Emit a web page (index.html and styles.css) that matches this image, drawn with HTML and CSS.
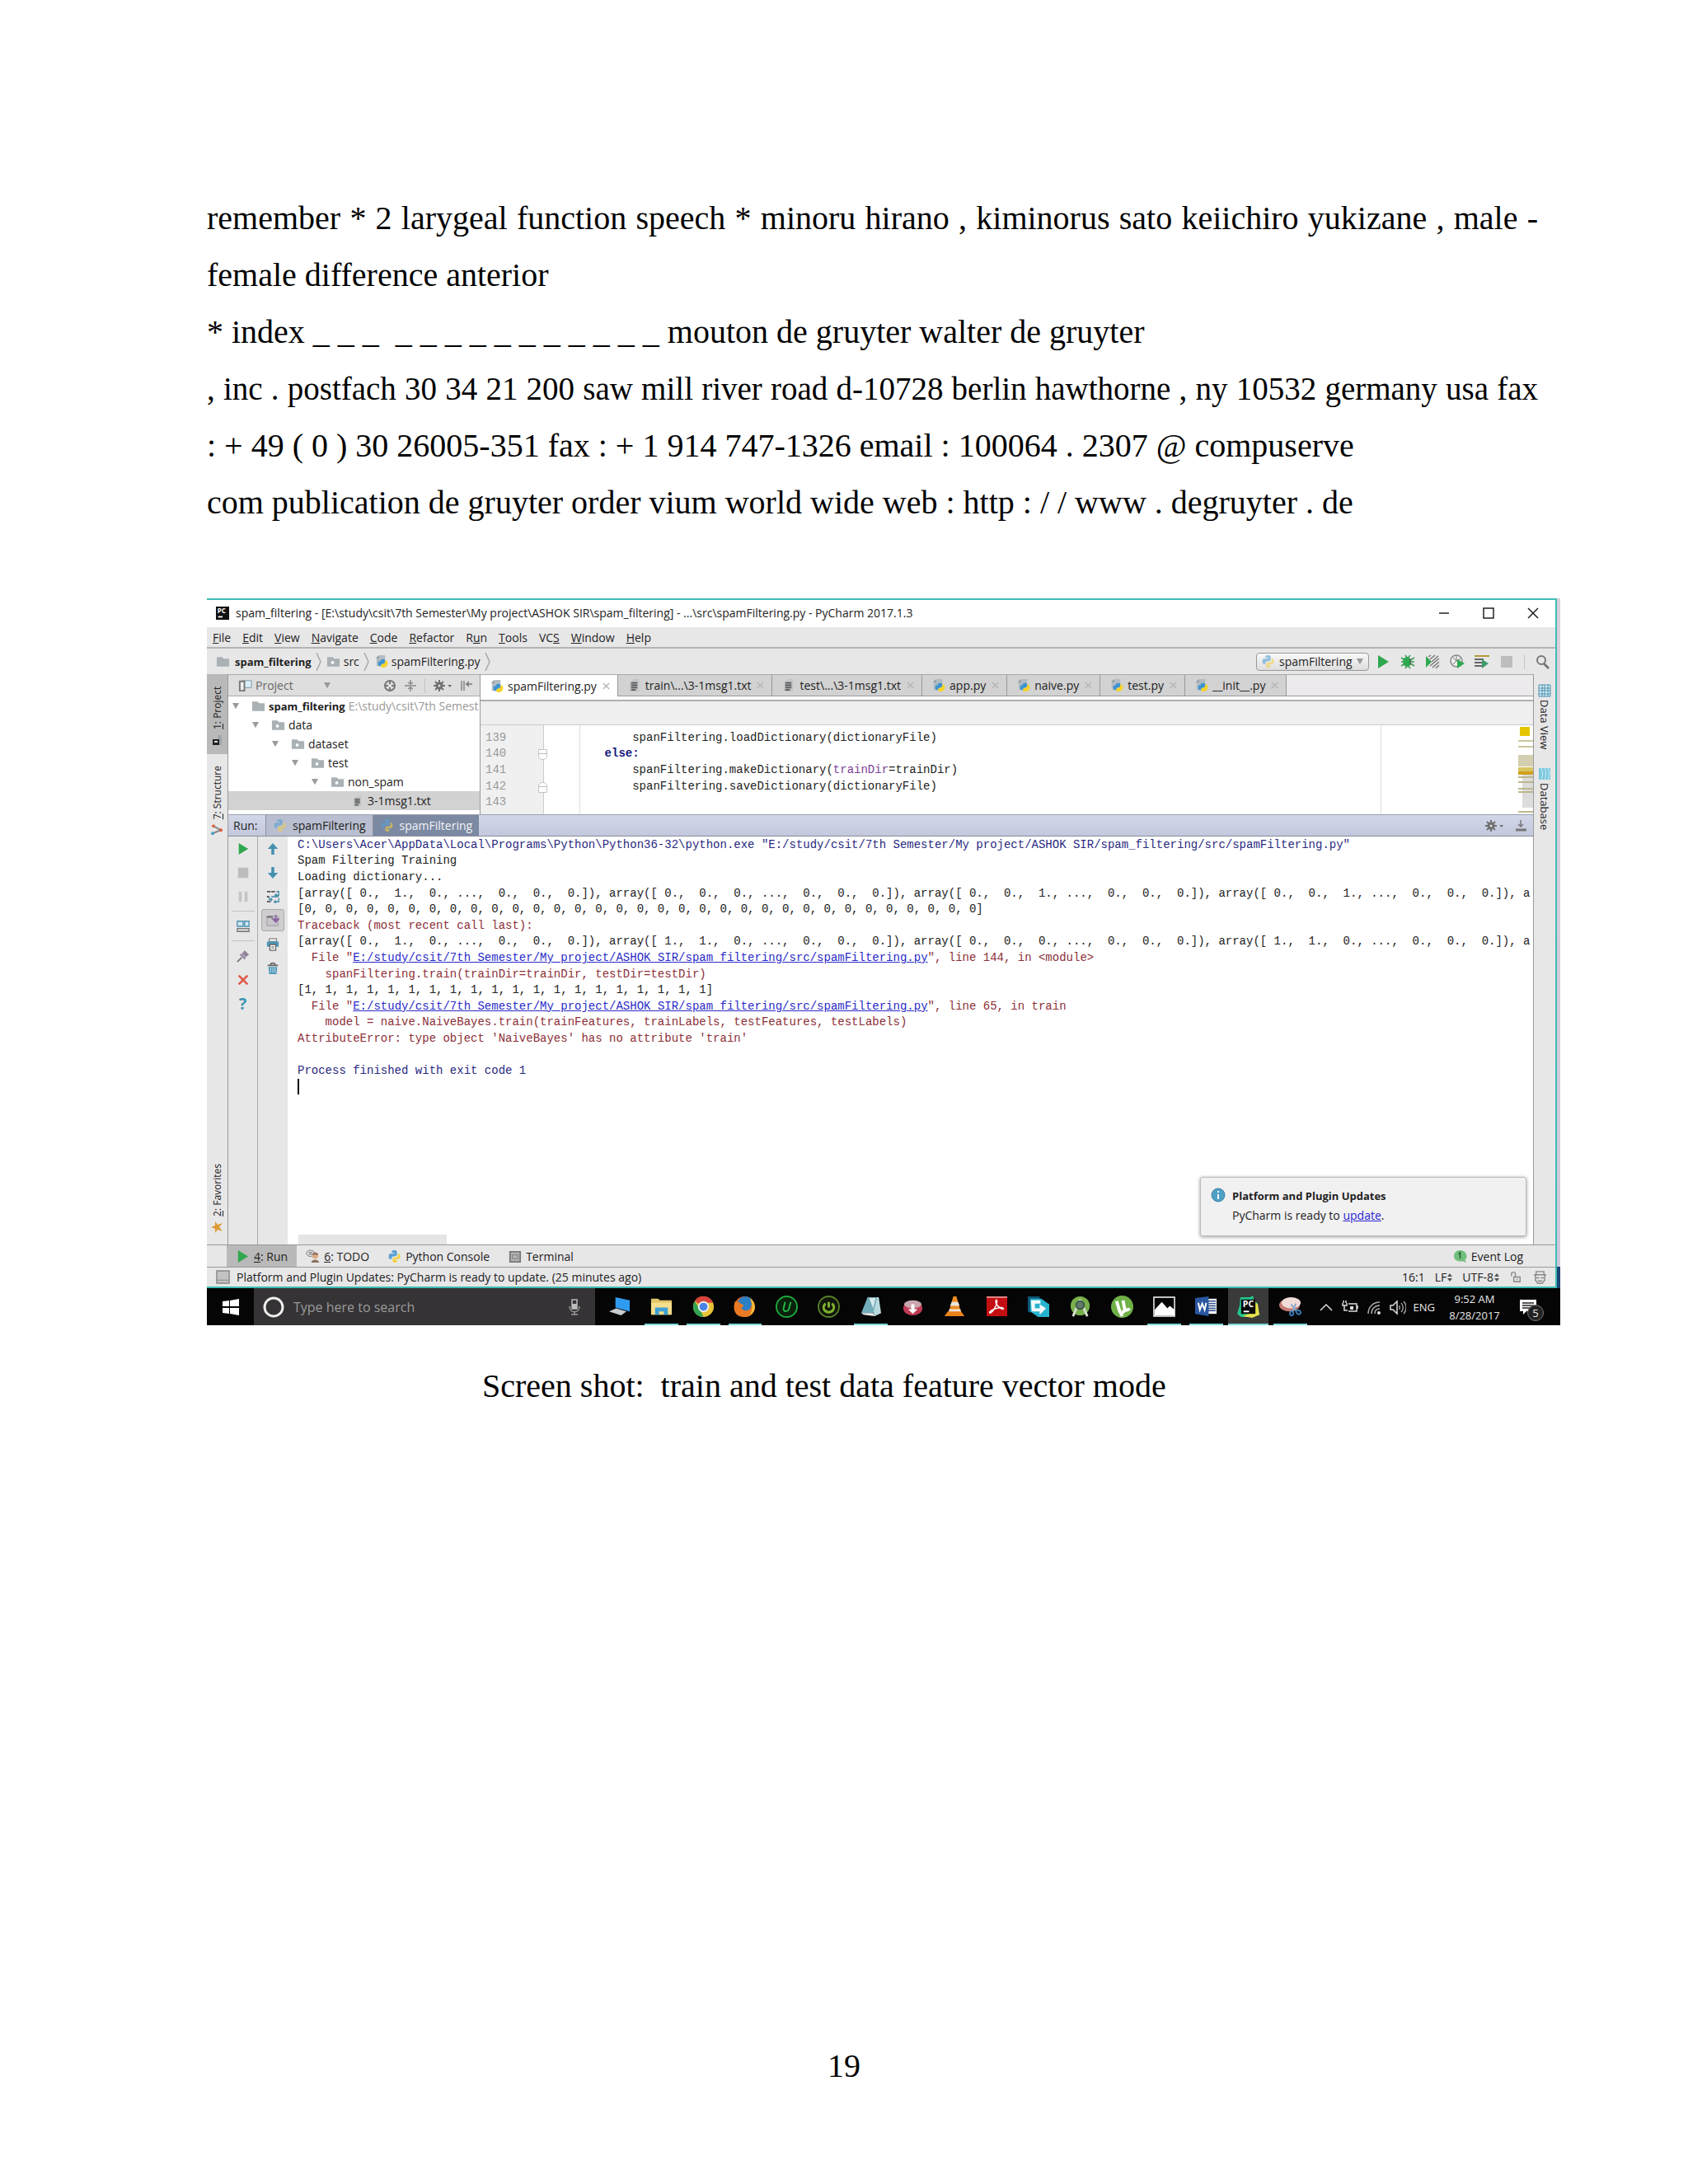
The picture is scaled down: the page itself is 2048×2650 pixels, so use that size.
FILE: index.html
```html
<!DOCTYPE html>
<html lang="en">
<head>
  <meta charset="UTF-8">
  <title>Screen shot: train and test data feature vector mode</title>
  <link rel="stylesheet" href="styles.css">
</head>
<body>
<svg class="defs" aria-hidden="true">
  <symbol id="folder" viewBox="0 0 18 14"><path d="M1 1h7l2 2h7v10H1z" fill="#a9b1b5"/></symbol>
  <symbol id="package" viewBox="0 0 18 14"><path d="M1 1h7l2 2h7v10H1z" fill="#a9b1b5"/><circle cx="8" cy="8" r="2" fill="#fff"/></symbol>
  <symbol id="python" viewBox="0 0 16 16"><path d="M8 1c-3 0-3 1-3 3h3v1H3c-2 0-2 6 0 6h2V9c0-2 5 0 6-3V3c0-2-2-2-3-2z" fill="#5a9fd4"/><path d="M8 15c3 0 3-1 3-3H8v-1h5c2 0 2-6 0-6h-1v3c0 2-6 0-6 3v2c0 2 1 2 2 2z" fill="#f3cf3f"/></symbol>
  <symbol id="py" viewBox="0 0 18 18"><path d="M7 1h7v14H3V5z" fill="#b3bcc2"/><path d="M2 5l4-4v4z" fill="#8f999f"/><path d="M11 6c-2 0-3 1-3 3H6c-2 1-1 6 1 6h2c0-4 3-3 5-4V8c0-2-1-2-3-2z" fill="#3e94d1"/><path d="M14 8h2c3 3 1 9-4 9-3 0-4-1-3-4 3-1 5 0 5-5z" fill="#f5d32c"/></symbol>
  <symbol id="txt" viewBox="0 0 16 18"><path d="M7 1h7v16H2V6z" fill="#c3c6c8"/><path d="M4 6h8M4 9h8M4 12h8M4 15h6" stroke="#555" stroke-width="2"/></symbol>
  <symbol id="play" viewBox="0 0 16 18"><path d="M2 1l13 8-13 8z" fill="#2fa84f"/></symbol>
  <symbol id="gear" viewBox="0 0 24 16"><path d="M8 1v14M1 8h14M3 3l10 10M13 3L3 13" stroke="#707070" stroke-width="2"/><circle cx="8" cy="8" r="3" fill="#ddd" stroke="#707070" stroke-width="3"/><path d="M18 7h5l-2 3z" fill="#707070"/></symbol>
  <symbol id="open" viewBox="0 0 12 10"><path d="M1 0h10L6 9z" fill="#9a9a9a"/></symbol>
  <symbol id="cross" viewBox="0 0 10 10"><path d="M1 1l8 8M9 1L1 9" stroke="#b5b5b5" stroke-width="1.5"/></symbol>
  <symbol id="sep" viewBox="0 0 8 24"><path d="M1 1l5 11-5 11" fill="none" stroke="#a8a8a8" stroke-width="1.5"/></symbol>
</svg>

<main class="page">
  <div class="text">
    <p class="full">remember * 2 larygeal function speech * minoru hirano , kiminorus sato keiichiro yukizane , male -</p>
    <p>female difference anterior</p>
    <p>* index _ _ _&nbsp; _ _ _ _ _ _ _ _ _ _ _ mouton de gruyter walter de gruyter</p>
    <p class="full tight">, inc . postfach 30 34 21 200 saw mill river road d-10728 berlin hawthorne , ny 10532 germany usa fax</p>
    <p>: + 49 ( 0 ) 30 26005-351 fax : + 1 914 747-1326 email : 100064 . 2307 @ compuserve</p>
    <p>com publication de gruyter order vium world wide web : http : / / www . degruyter . de</p>
  </div>

  <figure>
    <div class="desktop">
      <div class="window">
        <header class="titlebar">
          <svg class="logo" viewBox="0 0 18 18"><rect width="18" height="18" fill="#111"/><path d="M3 14h6" stroke="#fff" stroke-width="2"/><text x="2" y="9" class="logo-text">PC</text></svg>
          <span>spam_filtering - [E:\study\csit\7th Semester\My project\ASHOK SIR\spam_filtering] - ...\src\spamFiltering.py - PyCharm 2017.1.3</span>
          <div class="winbtns">
            <button aria-label="Minimize"><svg viewBox="0 0 14 14"><path d="M1 7h12" stroke="#222" stroke-width="1.5"/></svg></button>
            <button aria-label="Maximize"><svg viewBox="0 0 14 14"><rect x="1" y="1" width="12" height="12" fill="none" stroke="#222" stroke-width="1.5"/></svg></button>
            <button aria-label="Close"><svg viewBox="0 0 14 14"><path d="M1 1l12 12M13 1L1 13" stroke="#222" stroke-width="1.5"/></svg></button>
          </div>
        </header>

        <nav class="menubar">
          <button><u>F</u>ile</button><button><u>E</u>dit</button><button><u>V</u>iew</button><button><u>N</u>avigate</button><button><u>C</u>ode</button><button><u>R</u>efactor</button><button>R<u>u</u>n</button><button><u>T</u>ools</button><button>VC<u>S</u></button><button><u>W</u>indow</button><button><u>H</u>elp</button>
        </nav>

        <div class="navbar">
          <svg class="i-folder"><use href="#folder"/></svg><a href="#" class="bold">spam_filtering</a><svg class="i-sep"><use href="#sep"/></svg>
          <svg class="i-folder"><use href="#package"/></svg><a href="#">src</a><svg class="i-sep"><use href="#sep"/></svg>
          <svg class="i-file"><use href="#py"/></svg><a href="#">spamFiltering.py</a><svg class="i-sep"><use href="#sep"/></svg>
          <div class="runbar">
            <label class="config" aria-label="Run configuration">
              <svg class="i-file faint"><use href="#python"/></svg>
              <select><option>spamFiltering</option></select>
              <svg class="i-caret"><use href="#open"/></svg>
            </label>
            <button aria-label="Run"><svg viewBox="0 0 18 18"><path d="M3 1l13 8-13 8z" fill="#2fa84f"/></svg></button>
            <button aria-label="Debug"><svg viewBox="0 0 18 18"><path d="M1 4l16 10M1 14L17 4M1 9h16M6 1l3 4 3-4M6 17l3-4 3 4" stroke="#3b9a55" stroke-width="1.5" fill="none"/><ellipse cx="8" cy="9" rx="5" ry="6" fill="#2fa84f"/><path d="M12 5v8" stroke="#555"/></svg></button>
            <button aria-label="Coverage"><svg viewBox="0 0 18 18"><path d="M1 2l7 7-7 7z" fill="#2fa84f"/><path d="M4 3l3-2M6 6l6-5M8 9l8-7M6 14l11-9M9 16l8-7M13 17l4-4" stroke="#777" stroke-width="1.5"/></svg></button>
            <button aria-label="Profile"><svg viewBox="0 0 18 18"><circle cx="8" cy="8" r="7" fill="#eee" stroke="#888" stroke-width="1.5"/><path d="M4 4l4 4-4 4M8 2v6l5-3" stroke="#777" fill="none"/><path d="M9 6l9 5-9 6z" fill="#2fa84f"/></svg></button>
            <button aria-label="Concurrency"><svg viewBox="0 0 18 18"><path d="M0 2h18" stroke="#b39a37" stroke-width="2"/><path d="M0 6h11M0 10h9M0 14h9" stroke="#666" stroke-width="2"/><path d="M9 6l8 5-8 6z" fill="#3b9a6a"/></svg></button>
            <button aria-label="Stop"><svg viewBox="0 0 18 18"><rect x="2" y="2" width="14" height="14" fill="#bdbdbd"/></svg></button>
            <i class="bar"></i>
            <button aria-label="Search everywhere"><svg viewBox="0 0 18 18"><circle cx="8" cy="7" r="5" fill="none" stroke="#777" stroke-width="2"/><path d="M11 11l6 6" stroke="#777" stroke-width="3"/></svg></button>
          </div>
        </div>

        <div class="workspace">
          <aside class="stripe left">
            <button class="on"><svg viewBox="0 0 14 14"><path d="M1 1h5v12H1z" fill="#a0a6ab"/><path d="M4 1h8v7H4z" fill="#222"/><path d="M6 4h4v2H6z" fill="#ddd"/></svg><span><u>1</u>: Project</span></button>
            <button><svg viewBox="0 0 14 14"><path d="M12 3L2 7l9 5" stroke="#888" stroke-width="2" fill="none"/><circle cx="12" cy="3" r="2" fill="#4a9fc0"/><circle cx="2" cy="7" r="2" fill="#db5b45"/><circle cx="11" cy="12" r="2" fill="#d5674f"/></svg><span><u>7</u>: Structure</span></button>
            <button class="last"><svg viewBox="0 0 14 14"><path d="M14 7L9 9v5l-3-4-6 2 4-5-4-5 6 2 3-4v5z" fill="#dc9a35"/></svg><span><u>2</u>: Favorites</span></button>
          </aside>

          <div class="center">
            <div class="upper">
              <section class="project">
                <div class="phead">
                  <svg class="i-file" viewBox="0 0 18 18"><rect x="6" y="3" width="11" height="9" fill="#d9edf5" stroke="#7e9caa"/><path d="M2 4h6v12H2z" fill="#eee" stroke="#777" stroke-width="2"/></svg>
                  <span>Project</span>
                  <svg class="i-drop"><use href="#open"/></svg>
                  <div class="ptools">
                    <svg class="i-tool" viewBox="0 0 16 16"><circle cx="8" cy="8" r="6" fill="none" stroke="#777" stroke-width="2"/><path d="M8 1v5M8 10v5M1 8h5M10 8h5" stroke="#777" stroke-width="2"/></svg>
                    <svg class="i-tool" viewBox="0 0 16 16"><path d="M1 8h14M8 1v5M8 10v5M5 4l3 2 3-2M5 12l3-2 3 2" stroke="#888" stroke-width="1.5" fill="none"/></svg>
                    <i class="bar"></i>
                    <svg class="i-gear"><use href="#gear"/></svg>
                    <svg class="i-tool" viewBox="0 0 16 16"><path d="M2 2v12M5 2v12" stroke="#888" stroke-width="1.5"/><path d="M15 6H8l3-3M8 6l3 3" stroke="#777" stroke-width="1.5" fill="none"/></svg>
                  </div>
                </div>
                <ul class="tree">
                  <li><svg class="i-open"><use href="#open"/></svg><svg class="i-folder"><use href="#folder"/></svg><b>spam_filtering</b><span class="dim">E:\study\csit\7th Semest</span></li>
                  <li class="d1"><svg class="i-open"><use href="#open"/></svg><svg class="i-folder"><use href="#package"/></svg>data</li>
                  <li class="d2"><svg class="i-open"><use href="#open"/></svg><svg class="i-folder"><use href="#package"/></svg>dataset</li>
                  <li class="d3"><svg class="i-open"><use href="#open"/></svg><svg class="i-folder"><use href="#package"/></svg>test</li>
                  <li class="d4"><svg class="i-open"><use href="#open"/></svg><svg class="i-folder"><use href="#package"/></svg>non_spam</li>
                  <li class="d5 sel"><svg class="i-folder"><use href="#txt"/></svg>3-1msg1.txt</li>
                </ul>
              </section>

              <section class="editor">
                <div class="tabs">
                  <button class="on"><svg class="i-file"><use href="#py"/></svg>spamFiltering.py<svg class="i-x"><use href="#cross"/></svg></button>
                  <button><svg class="i-file"><use href="#txt"/></svg>train\...\3-1msg1.txt<svg class="i-x"><use href="#cross"/></svg></button>
                  <button><svg class="i-file"><use href="#txt"/></svg>test\...\3-1msg1.txt<svg class="i-x"><use href="#cross"/></svg></button>
                  <button><svg class="i-file"><use href="#py"/></svg>app.py<svg class="i-x"><use href="#cross"/></svg></button>
                  <button><svg class="i-file"><use href="#py"/></svg>naive.py<svg class="i-x"><use href="#cross"/></svg></button>
                  <button><svg class="i-file"><use href="#py"/></svg>test.py<svg class="i-x"><use href="#cross"/></svg></button>
                  <button><svg class="i-file"><use href="#py"/></svg>__init__.py<svg class="i-x"><use href="#cross"/></svg></button>
                </div>
                <div class="crumb"></div>
                <div class="code">
                  <div class="gutter"><span>139</span><span class="fold">140</span><span>141</span><span class="fold up">142</span><span>143</span></div>
                  <div class="lines">
                    <pre>        spanFiltering.loadDictionary(dictionaryFile)</pre>
                    <pre>    <b>else:</b></pre>
                    <pre>        spanFiltering.makeDictionary(<em>trainDir</em>=trainDir)</pre>
                    <pre>        spanFiltering.saveDictionary(dictionaryFile)</pre>
                    <pre> </pre>
                  </div>
                  <svg class="marks" viewBox="0 0 18 108" preserveAspectRatio="none">
                    <rect x="2" y="2" width="12" height="11" fill="#e5c500"/>
                    <path d="M0 19h18M0 26h18" stroke="#cfc79a" stroke-width="2"/>
                    <rect y="36" width="18" height="14" fill="#d3cfb0"/>
                    <rect y="51" width="18" height="5" fill="#d8c463"/>
                    <rect y="56" width="18" height="4" fill="#cfa21c"/>
                    <rect x="5" y="60" width="13" height="40" fill="#dcdcdc"/>
                    <path d="M0 63h18M0 69h18M0 77h18M0 81h18M0 105h18" stroke="#bdb78d" stroke-width="2"/>
                  </svg>
                </div>
              </section>
            </div>

            <section class="run">
              <div class="rhead">
                <span>Run:</span>
                <button><svg class="i-file faint"><use href="#python"/></svg>spamFiltering</button>
                <button class="on"><svg class="i-file faint"><use href="#python"/></svg>spamFiltering</button>
                <div class="rtools">
                  <svg class="i-gear"><use href="#gear"/></svg>
                  <svg class="i-tool" viewBox="0 0 16 16"><path d="M8 1v8M5 6l3 3 3-3" stroke="#777" fill="none" stroke-width="1.5"/><path d="M2 13h13" stroke="#777" stroke-width="3"/></svg>
                </div>
              </div>
              <div class="rbody">
                <div class="tools">
                  <button aria-label="Rerun"><svg viewBox="0 0 18 18"><path d="M3 1l13 8-13 8z" fill="#2fa84f"/></svg></button>
                  <button aria-label="Stop"><svg viewBox="0 0 18 18"><rect x="2" y="2" width="14" height="14" fill="#bdbdbd"/></svg></button>
                  <button aria-label="Pause"><svg viewBox="0 0 18 18"><path d="M3 2h4v14H3zM11 2h4v14h-4z" fill="#c4c4c4"/></svg></button>
                  <hr>
                  <button aria-label="Layout"><svg viewBox="0 0 18 18"><path d="M1 2h8v7H1zM11 2h6v7h-6z" fill="#cfe7f3" stroke="#4a8fae" stroke-width="1.5"/><path d="M1 12h16v4H1z" fill="#ddd" stroke="#777" stroke-width="1.5"/></svg></button>
                  <hr>
                  <button aria-label="Pin"><svg viewBox="0 0 18 18"><path d="M1 17l6-6" stroke="#777" stroke-width="2"/><path d="M4 7l7 7 2-4 4-3-6-6-3 4z" fill="#91859c"/><path d="M7 6l5 5" stroke="#ddd"/></svg></button>
                  <button aria-label="Close"><svg viewBox="0 0 18 18"><path d="M3 3l12 12M15 3L3 15" stroke="#e0594b" stroke-width="3"/></svg></button>
                  <button aria-label="Help" class="help">?</button>
                </div>
                <div class="tools second">
                  <button aria-label="Up"><svg viewBox="0 0 18 18"><path d="M9 1l7 8h-5v8H7V9H2z" fill="#4591b0"/></svg></button>
                  <button aria-label="Down"><svg viewBox="0 0 18 18"><path d="M9 17l7-8h-5V1H7v8H2z" fill="#4591b0"/></svg></button>
                  <button aria-label="Soft wrap"><svg viewBox="0 0 18 18"><path d="M1 2h11M1 9h3M1 16h6" stroke="#555" stroke-width="2" stroke-dasharray="5 1"/><path d="M14 2h3v5h-5M7 9h10M4 9v4h4M17 11v5h-6M14 5l-2 2 2 2M6 11l2 2-2 2M13 14l-2 2 2 2" stroke="#438ca8" stroke-width="1.5" fill="none"/></svg></button>
                  <button aria-label="Scroll to end" class="pressed"><svg viewBox="0 0 18 18"><path d="M1 3h15v13H1z" fill="#c9c5cd" stroke="#999"/><path d="M1 4h8" stroke="#666" stroke-width="2"/><path d="M13 1v8M9 7l4 4 4-4z" stroke="#8b65a2" stroke-width="2" fill="#8b65a2"/></svg></button>
                  <button aria-label="Print"><svg viewBox="0 0 18 18"><path d="M4 1h10v4H4z" fill="#eee" stroke="#666"/><path d="M1 5h16v7H1z" fill="#4a97b8"/><path d="M5 9h8v8H5z" fill="#fff" stroke="#666" stroke-width="1.5"/><path d="M7 12h4M7 14h4" stroke="#666"/></svg></button>
                  <button aria-label="Clear"><svg viewBox="0 0 18 18"><path d="M2 5h14M6 4c0-3 6-3 6 0" stroke="#666" stroke-width="2" fill="none"/><path d="M3 7h12l-1 10H4z" fill="#4a97b8"/><path d="M6 8v7M9 8v7M12 8v7" stroke="#d5eaf3"/></svg></button>
                </div>
                <div class="console">
                  <div class="output">
                    <pre class="sys">C:\Users\Acer\AppData\Local\Programs\Python\Python36-32\python.exe "E:/study/csit/7th Semester/My project/ASHOK SIR/spam_filtering/src/spamFiltering.py"</pre>
                    <pre>Spam Filtering Training</pre>
                    <pre>Loading dictionary...</pre>
                    <pre>[array([ 0.,  1.,  0., ...,  0.,  0.,  0.]), array([ 0.,  0.,  0., ...,  0.,  0.,  0.]), array([ 0.,  0.,  1., ...,  0.,  0.,  0.]), array([ 0.,  0.,  1., ...,  0.,  0.,  0.]), a</pre>
                    <pre>[0, 0, 0, 0, 0, 0, 0, 0, 0, 0, 0, 0, 0, 0, 0, 0, 0, 0, 0, 0, 0, 0, 0, 0, 0, 0, 0, 0, 0, 0, 0, 0, 0]</pre>
                    <pre class="err">Traceback (most recent call last):</pre>
                    <pre>[array([ 0.,  1.,  0., ...,  0.,  0.,  0.]), array([ 1.,  1.,  0., ...,  0.,  0.,  0.]), array([ 0.,  0.,  0., ...,  0.,  0.,  0.]), array([ 1.,  1.,  0., ...,  0.,  0.,  0.]), a</pre>
                    <pre class="err">  File "<a href="#">E:/study/csit/7th Semester/My project/ASHOK SIR/spam_filtering/src/spamFiltering.py</a>", line 144, in &lt;module&gt;</pre>
                    <pre class="err">    spanFiltering.train(trainDir=trainDir, testDir=testDir)</pre>
                    <pre>[1, 1, 1, 1, 1, 1, 1, 1, 1, 1, 1, 1, 1, 1, 1, 1, 1, 1, 1, 1]</pre>
                    <pre class="err">  File "<a href="#">E:/study/csit/7th Semester/My project/ASHOK SIR/spam_filtering/src/spamFiltering.py</a>", line 65, in train</pre>
                    <pre class="err">    model = naive.NaiveBayes.train(trainFeatures, trainLabels, testFeatures, testLabels)</pre>
                    <pre class="err">AttributeError: type object 'NaiveBayes' has no attribute 'train'</pre>
                    <pre> </pre>
                    <pre class="sys">Process finished with exit code 1</pre>
                  </div>
                  <div class="caret"></div>
                  <div class="scroll"></div>
                  <div class="balloon">
                    <svg viewBox="0 0 18 18"><circle cx="9" cy="9" r="8" fill="#4f9fc4" stroke="#3d86a8"/><path d="M9 8v6M9 4v2" stroke="#fff" stroke-width="2"/></svg>
                    <div><b>Platform and Plugin Updates</b><br>PyCharm is ready to <a href="#">update</a>.</div>
                  </div>
                </div>
              </div>
            </section>
          </div>

          <aside class="stripe right">
            <button><svg viewBox="0 0 16 16"><path d="M1 1h14v14H1z" fill="#d8edf5"/><path d="M1 1h14v14H1zM1 5h14M1 8h14M1 12h14M5 1v14M8 1v14M12 1v14" stroke="#4a8fae" fill="none"/></svg><span>Data View</span></button>
            <button><svg viewBox="0 0 16 16"><path d="M1 1h14v14H1z" fill="#7cc8df"/><path d="M4 1c2 4 2 10 0 14M8 1c2 4 2 10 0 14M12 1c2 4 2 10 0 14" stroke="#d5f0f7" fill="none"/></svg><span>Database</span></button>
          </aside>
        </div>

        <div class="toolbar">
          <button class="on"><svg class="i-file"><use href="#play"/></svg><span><u>4</u>: Run</span></button>
          <button><svg class="i-file" viewBox="0 0 18 18"><ellipse cx="6" cy="5" rx="5" ry="4" fill="#ddd" stroke="#777"/><path d="M4 4h4M4 6h4" stroke="#666"/><circle cx="12" cy="8" r="4" fill="#d9ab84"/><path d="M8 7c1-4 8-4 8 0M7 17c0-5 10-5 10 0z" fill="#8e705e"/></svg><span><u>6</u>: TODO</span></button>
          <button><svg class="i-file"><use href="#python"/></svg><span>Python Console</span></button>
          <button><svg class="i-file" viewBox="0 0 18 18"><path d="M3 3h13v13H3z" fill="#b5b5b5" stroke="#777" stroke-width="2"/><path d="M6 7h7v5H6z" fill="none" stroke="#777"/></svg><span>Terminal</span></button>
          <button class="last"><svg class="i-file" viewBox="0 0 18 18"><path d="M9 1c10 0 10 12 6 12l2 4-5-2C-2 18-2 1 9 1z" fill="#71bf7c"/><path d="M7 6l2-2v8" stroke="#275c35" stroke-width="1.5" fill="none"/></svg><span>Event Log</span></button>
        </div>
        <footer class="status">
          <svg class="i-file" viewBox="0 0 18 18"><path d="M1 1h16v16H1z" fill="#c3c3c3" stroke="#888" stroke-width="1.5"/><path d="M2 13h14" stroke="#888"/></svg>
          <span>Platform and Plugin Updates: PyCharm is ready to update. (25 minutes ago)</span>
          <div class="info">
            <span>16:1</span>
            <span class="pick">LF<svg viewBox="0 0 6 10"><path d="M0 4l3-4 3 4zM0 6h6l-3 4z" fill="#555"/></svg></span>
            <span class="pick">UTF-8<svg viewBox="0 0 6 10"><path d="M0 4l3-4 3 4zM0 6h6l-3 4z" fill="#555"/></svg></span>
            <svg class="i-file" viewBox="0 0 18 18"><path d="M6 9h8v6H6zM3 8V5c0-3 5-3 5 0v4" fill="none" stroke="#888" stroke-width="1.5"/><path d="M10 11v2" stroke="#777"/></svg>
            <svg class="i-file" viewBox="0 0 18 18"><path d="M4 6V2h10v4M1 6h16M3 7v6l3 4h6l3-4V7M4 10h4M10 10h4M6 14h6" fill="none" stroke="#888" stroke-width="1.5"/></svg>
          </div>
        </footer>
      </div>

      <div class="taskbar">
        <button class="start" aria-label="Start"><svg viewBox="0 0 20 20"><path d="M0 3l8-1v7H0zM9 2l11-2v9H9zM0 11h8v7l-8-1zM9 11h11v9L9 18z" fill="#fff"/></svg></button>
        <label class="search">
          <svg class="ring" viewBox="0 0 26 26"><circle cx="13" cy="13" r="11" fill="none" stroke="#eee" stroke-width="3"/></svg>
          <input type="text" placeholder="Type here to search" aria-label="Search">
          <svg class="mic" viewBox="0 0 16 20"><path d="M5 1h6v11H5z" fill="none" stroke="#bbb" stroke-width="1.5"/><path d="M5 6h6v6H5z" fill="#bbb"/><path d="M2 9c0 9 12 9 12 0M8 16v3M4 19h8" fill="none" stroke="#999" stroke-width="1.5"/></svg>
        </label>
        <div class="apps">
          <a href="#"><svg viewBox="0 0 28 28"><path d="M9 2l18 4v14L9 15z" fill="#2f9bf0"/><path d="M1 20l9-4 13 4-7 5z" fill="#c9cdd0"/></svg></a>
          <a href="#" class="open"><svg viewBox="0 0 28 28"><path d="M1 4h9l2 2h15v18H1z" fill="#e3c667"/><path d="M1 9h26v15H1z" fill="#f7de8d"/><path d="M6 24v-9h16v9h-5v-4h-6v4z" fill="#3ea0d4"/></svg></a>
          <a href="#" class="open"><svg viewBox="0 0 28 28"><circle cx="14" cy="14" r="13" fill="#e9c43a"/><path d="M14 14L3 7C8-2 22-1 26 9H14z" fill="#d8433a"/><path d="M3 7l8 13 3 7C2 27-2 15 3 7z" fill="#35a452"/><circle cx="14" cy="14" r="6" fill="#4a83e8" stroke="#eee" stroke-width="2"/></svg></a>
          <a href="#" class="open"><svg viewBox="0 0 28 28"><circle cx="14" cy="14" r="13" fill="#e66a1f"/><circle cx="15" cy="11" r="10" fill="#2b7fc4"/><path d="M2 7c2 2 4 0 7 3 4 1 5 3 1 5 1 5 9 5 11 1 3-4 1-9 0-12 11 9 5 23-7 23C0 27-1 15 2 7z" fill="#ea7a24"/><path d="M21 3c9 8 6 18-1 22 5-8 4-14 1-22z" fill="#f5c23b"/></svg></a>
          <a href="#"><svg viewBox="0 0 28 28"><circle cx="14" cy="14" r="13" fill="#07210c" stroke="#1fa83c" stroke-width="2"/><path d="M12 8l-2 8c-1 5 6 5 7 0l2-8" fill="none" stroke="#25b845" stroke-width="2"/></svg></a>
          <a href="#"><svg viewBox="0 0 28 28"><circle cx="14" cy="14" r="13" fill="#10160a" stroke="#587f2a" stroke-width="2"/><path d="M10 10c-6 6 0 11 4 11s10-5 4-11M14 8v7" fill="none" stroke="#7db12d" stroke-width="3"/></svg></a>
          <a href="#" class="open"><svg viewBox="0 0 28 28"><path d="M10 2h14l3 20-8 4z" fill="#b8d9df"/><path d="M10 2h12l-5 20H2z" fill="#71acb9"/><path d="M12 3h8l-3 13z" fill="#d8e9ec"/><path d="M2 22h15l2 4-14-2z" fill="#eee"/></svg></a>
          <a href="#"><svg viewBox="0 0 28 28"><ellipse cx="14" cy="16" rx="12" ry="9" fill="#c03b55"/><ellipse cx="14" cy="11" rx="11" ry="5" fill="#c9a5ae"/><path d="M12 11h4v6h4l-6 6-6-6h4z" fill="#fff"/></svg></a>
          <a href="#"><svg viewBox="0 0 28 28"><path d="M12 1h4l6 21H6z" fill="#ed8b21"/><path d="M10 8h8l2 5H8zM7 17h14l1 4H6z" fill="#e9e4dd"/><path d="M5 20l-4 6h25l-4-6z" fill="#e8811b"/></svg></a>
          <a href="#"><svg viewBox="0 0 28 28"><path d="M1 1h26v25H1z" fill="#c40f12"/><path d="M1 1h26v2H1z" fill="#e28b8b"/><path d="M5 22c-2-3 14-9 17-6 1 3-7-1-9-6-1-3 0-6 1-4 1 4-5 16-9 16z" fill="none" stroke="#fff" stroke-width="1.5"/></svg></a>
          <a href="#"><svg viewBox="0 0 28 28"><path d="M1 1h15v20H1z" fill="#0f5373"/><path d="M4 4h14l10 7v16H14L4 20z" fill="#27b3cf"/><path d="M5 6h12v4h-7v6h6v-5l8 5-8 8v-4H6z" fill="#f3fafb"/></svg></a>
          <a href="#"><svg viewBox="0 0 28 28"><circle cx="14" cy="13" r="12" fill="#78b04a"/><path d="M14 5l-9 21M14 5l9 21" stroke="#d5dfd0" stroke-width="3"/><circle cx="14" cy="12" r="5" fill="#617b6d" stroke="#3d5549" stroke-width="2"/></svg></a>
          <a href="#"><svg viewBox="0 0 28 28"><circle cx="14" cy="14" r="14" fill="#70b147"/><path d="M7 7l4 13c4 3 7-1 6-4l-2-10M17 16c2 4 5 2 6 0M10 17l4 9" fill="none" stroke="#fff" stroke-width="4"/></svg></a>
          <a href="#" class="open"><svg viewBox="0 0 28 28"><path d="M1 2h26v24H1z" fill="#050505" stroke="#fff" stroke-width="1.5"/><path d="M2 25v-7l9-10 7 8 3-3 6 5v7z" fill="#fff"/></svg></a>
          <a href="#" class="open"><svg viewBox="0 0 28 28"><path d="M14 4h13v19H14z" fill="#f5f5f5"/><path d="M16 7h10M16 10h10M16 13h10M16 16h10M16 19h10" stroke="#31518f" stroke-width="1.5"/><path d="M0 3l17-2v25L0 23z" fill="#2a56a0"/><path d="M4 9l2 9 3-8 3 8 2-9" fill="none" stroke="#fff" stroke-width="2"/></svg></a>
          <a href="#" class="open on"><svg viewBox="0 0 28 28"><path d="M4 2h12l4-2 1 6 5 4-1 8 3 6-8 3H5l-5-4 3-10z" fill="#23c58a"/><path d="M20 6l6 5 2 13-9 4-12-2 12-5z" fill="#e6e24a"/><path d="M5 5h18v18H5z" fill="#0a0a0a"/><path d="M8 20h7" stroke="#fff" stroke-width="2"/><text x="7" y="15" class="app-text">PC</text></svg></a>
          <a href="#" class="open"><svg viewBox="0 0 28 28"><ellipse cx="13" cy="12" rx="13" ry="8" fill="#c57a74"/><ellipse cx="15" cy="9" rx="12" ry="7" fill="#f2dcda"/><path d="M15 11l7 9M21 10l-4 10" stroke="#8aa9c4" stroke-width="2"/><path d="M17 20c-5-1-4 6-1 5s2-4 1-5zM21 19c4-2 8 2 5 4s-5-2-5-4z" stroke="#3a7db8" stroke-width="2" fill="none"/></svg></a>
        </div>
        <div class="tray">
          <svg viewBox="0 0 20 20"><path d="M3 14l7-7 7 7" fill="none" stroke="#ddd" stroke-width="1.5"/></svg>
          <svg viewBox="0 0 20 20"><path d="M8 6h10v9H8M19 8v4" fill="none" stroke="#ddd" stroke-width="1.5"/><path d="M10 9h4v4h-4z" fill="#ddd"/><path d="M1 5v3h5V5M2 2v3M5 2v3M3 8v6h4" fill="none" stroke="#ddd" stroke-width="1.5"/></svg>
          <svg viewBox="0 0 20 20"><path d="M3 18C3 10 9 4 17 4M7 18c0-6 4-10 10-10M11 18c0-4 2-6 6-6" fill="none" stroke="#aaa" stroke-width="1.5"/><circle cx="16" cy="17" r="2" fill="#ddd"/></svg>
          <svg viewBox="0 0 20 20"><path d="M1 8h3l5-5v15l-5-5H1z" fill="none" stroke="#ddd" stroke-width="1.5"/><path d="M12 8v5M14 5c3 3 3 8 0 11M17 3c4 4 4 11 0 15" fill="none" stroke="#999" stroke-width="1.5"/></svg>
          <span>ENG</span>
          <time>9:52 AM<br>8/28/2017</time>
          <div class="notes"><svg viewBox="0 0 20 20"><path d="M0 1h20v14H8l-4 4v-4H0z" fill="#fff"/><path d="M3 5h14M3 8h14M3 11h10" stroke="#222" stroke-width="1.5"/></svg><span class="badge">5</span></div>
        </div>
      </div>
    </div>
    <figcaption>Screen shot: &nbsp;train and test data feature vector mode</figcaption>
  </figure>

  <div class="number">19</div>
</main>
</body>
</html>
```

FILE: styles.css
```css
* {
  box-sizing: border-box;
  margin: 0;
  padding: 0;
}

body {
  background: #fff;
  color: #000;
  font-family: "Liberation Serif", "Times New Roman", serif;
  font-size: 40px;
}

button, input, select {
  border: 0;
  background: none;
  color: inherit;
  font: inherit;
}

svg {
  display: block;
  flex: none;
}

a {
  color: inherit;
  text-decoration: none;
}

.defs {
  position: absolute;
  width: 0;
  height: 0;
}

.page {
  padding: 230px 155px 120px 251px;
}

.text {
  margin-right: 27px;
}

.text p {
  line-height: 69px;
  white-space: nowrap;
}

.text .full {
  text-align: justify;
  text-align-last: justify;
}

.text .tight {
  font-size: 39px;
}

figure {
  margin-top: 82px;
}

figcaption {
  margin-top: 39px;
  padding-left: 334px;
  line-height: 69px;
}

.number {
  margin-top: 756px;
  margin-right: 96px;
  line-height: 69px;
  text-align: center;
}

/* desktop */
.desktop {
  background: linear-gradient(#dcd0dc 0, #cfc8dc 811px, #1c4474 811px);
  color: #222;
  font-family: "Open Sans", "Noto Sans", sans-serif;
  font-size: 14px;
}

.window {
  margin-right: 4px;
  border: 2px solid #3fbdb3;
  border-left: 0;
  background: #e8e7e8;
}

.titlebar {
  display: flex;
  align-items: center;
  gap: 8px;
  height: 33px;
  padding: 0 0 2px 11px;
  background: #fff;
}

.logo {
  width: 16px;
  height: 16px;
}

.logo-text {
  fill: #fff;
  font-size: 9px;
  font-weight: bold;
}

.winbtns {
  display: flex;
  margin-left: auto;
}

.winbtns button {
  display: flex;
  justify-content: center;
  width: 54px;
}

.winbtns svg {
  width: 14px;
  height: 14px;
}

.menubar {
  display: flex;
  gap: 14px;
  height: 26px;
  padding-left: 7px;
  border-bottom: 2px solid #b4b4b4;
}

.navbar {
  display: flex;
  align-items: center;
  gap: 4px;
  height: 31px;
  padding-left: 11px;
}

.bold, .tree b, .balloon b {
  font-size: 13px;
  font-weight: bold;
}

.bold {
  margin-left: 2px;
}

.i-folder {
  width: 17px;
  height: 14px;
}

.i-file {
  width: 17px;
  height: 17px;
}

.i-sep {
  width: 8px;
  height: 24px;
  margin: 0 1px;
}

.i-tool {
  width: 16px;
  height: 16px;
}

.i-gear {
  width: 24px;
  height: 16px;
}

.i-open, .i-drop, .i-caret {
  width: 10px;
  height: 8px;
}

.i-drop {
  margin-left: 32px;
}

.i-x {
  width: 9px;
  height: 9px;
  margin-left: 2px;
}

.faint {
  opacity: .6;
}

.runbar {
  display: flex;
  align-items: center;
  gap: 12px;
  margin-left: auto;
  padding-right: 7px;
}

.runbar button svg {
  width: 18px;
  height: 18px;
}

.config {
  display: flex;
  align-items: center;
  width: 137px;
  height: 22px;
  margin-right: -4px;
  padding: 0 5px;
  border: 1px solid #999;
  border-radius: 4px;
  background: linear-gradient(#f8f8f8, #dedede);
}

.config select {
  flex: 1;
  min-width: 0;
  margin-left: 5px;
  appearance: none;
}

.bar {
  width: 1px;
  height: 18px;
  background: #c5c5c5;
}

.workspace {
  display: flex;
  height: 692px;
}

.stripe {
  display: flex;
  flex-direction: column;
  flex: none;
  width: 27px;
  font-size: 12px;
}

.stripe button {
  display: flex;
  align-items: center;
  width: 26px;
  writing-mode: vertical-rl;
}

.stripe svg {
  width: 14px;
  height: 14px;
}

.left {
  width: 26px;
  border-right: 1px solid #9a9a9a;
}

.left button {
  gap: 6px;
  width: 25px;
  padding: 10px 0 14px;
  transform: rotate(180deg);
}

.left .on {
  height: 97px;
  background: #b9b9b9;
}

.left .last {
  margin-top: auto;
  padding-top: 14px;
}

.right {
  padding-top: 12px;
  gap: 22px;
  border-left: 1px solid #9a9a9a;
  font-size: 13px;
}

.right button {
  gap: 3px;
}

.right svg {
  width: 16px;
  height: 16px;
}

.center {
  display: flex;
  flex: 1;
  flex-direction: column;
  min-width: 0;
}

.upper {
  display: flex;
  height: 170px;
  background: #fff;
}

.project {
  flex: none;
  width: 306px;
  border-right: 1px solid #9a9a9a;
  overflow: hidden;
}

.phead {
  display: flex;
  align-items: center;
  gap: 4px;
  height: 27px;
  padding-left: 12px;
  border-top: 1px solid #aaa;
  border-bottom: 1px solid #aaa;
  background: #dedede;
  color: #666;
}

.ptools {
  display: flex;
  align-items: center;
  gap: 9px;
  margin-left: auto;
  padding-right: 8px;
}

.tree {
  list-style: none;
}

.tree li {
  display: flex;
  align-items: center;
  gap: 4px;
  height: 23px;
  padding-left: 4px;
  white-space: nowrap;
}

.tree .i-folder {
  margin-left: 10px;
}

.tree .dim {
  color: #999;
}

.tree .d1 { padding-left: 28px; }
.tree .d2 { padding-left: 52px; }
.tree .d3 { padding-left: 76px; }
.tree .d4 { padding-left: 100px; }
.tree .d5 { padding-left: 138px; }

.tree .sel {
  background: #d2d2d2;
}

.editor {
  display: flex;
  flex: 1;
  flex-direction: column;
  min-width: 0;
}

.tabs {
  display: flex;
  height: 27px;
  border-top: 1px solid #aaa;
  border-bottom: 1px solid #999;
  background: #eceaec;
}

.tabs button {
  display: flex;
  align-items: center;
  gap: 5px;
  padding: 0 9px 0 11px;
  border-right: 1px solid #999;
  background: #d2d2d2;
}

.tabs .on {
  margin-bottom: -1px;
  background: #fff;
}

.crumb {
  height: 31px;
  margin-top: 4px;
  border-top: 2px solid #b0b0b0;
  border-bottom: 1px solid #ccc;
  background: #f0eff0;
}

.code {
  display: flex;
  flex: 1;
  font-family: "Liberation Mono", "Courier New", monospace;
  font-size: 14px;
}

.gutter, .lines {
  display: grid;
  grid-template-rows: repeat(5, 1fr);
  align-items: center;
  height: 108px;
}

.gutter {
  position: relative;
  flex: none;
  width: 77px;
  padding: 5px 0 5px 6px;
  border-right: 1px solid #ccc;
  background: #f0f0f0;
  color: #999;
}

.fold::after {
  content: "";
  position: absolute;
  right: -5px;
  width: 9px;
  height: 11px;
  margin-top: 3px;
  border: 1px solid #c4c4c4;
  border-radius: 0 0 5px 5px;
  background: linear-gradient(#fff 4px, #bbb 4px, #bbb 5px, #fff 5px);
}

.up::after {
  border-radius: 5px 5px 0 0;
}

.lines {
  flex: 1;
  padding: 5px 0 5px 40px;
  background: linear-gradient(90deg, transparent 43px, #ddd 43px, #ddd 44px, transparent 44px, transparent 1015px, #ddd 1015px, #ddd 1016px, transparent 1016px);
}

pre {
  font-family: inherit;
}

.lines b {
  color: #16167c;
}

.lines em {
  color: #7b3f98;
  font-style: normal;
}

.marks {
  width: 18px;
  height: 108px;
}

.run {
  display: flex;
  flex: 1;
  flex-direction: column;
}

.rhead {
  display: flex;
  align-items: center;
  height: 27px;
  padding-left: 6px;
  border-top: 1px solid #9aa0ae;
  border-bottom: 1px solid #888d9a;
  background: linear-gradient(#d2d7e8, #c4c8dd);
}

.rhead span {
  width: 39px;
}

.rhead button {
  display: flex;
  align-items: center;
  gap: 7px;
  height: 25px;
  padding: 0 8px;
  border-left: 1px solid #8d93a2;
  background: #b9bfd0;
}

.rhead .on {
  background: #7b89a3;
  color: #f4f4f4;
}

.rtools {
  display: flex;
  gap: 12px;
  margin-left: auto;
  padding-right: 7px;
}

.rbody {
  display: flex;
  flex: 1;
}

.tools {
  display: flex;
  flex: none;
  flex-direction: column;
  align-items: center;
  width: 36px;
  border-right: 1px solid #aaa;
}

.tools button {
  display: flex;
  align-items: center;
  justify-content: center;
  width: 28px;
  height: 29px;
}

.tools svg {
  width: 16px;
  height: 16px;
}

.tools hr {
  width: 28px;
  margin: 3px 0;
  border: 0;
  border-top: 1px solid #c2c2c2;
}

.tools .help {
  color: #3f96b5;
  font-size: 20px;
  font-weight: bold;
}

.second {
  border-right: 0;
}

.second .pressed {
  height: 27px;
  margin: 1px 0;
  border: 1px solid #aaa;
  border-radius: 3px;
  background: #cfcdcf;
}

.console {
  position: relative;
  flex: 1;
  min-width: 0;
  padding-left: 12px;
  background: #fff;
  font-family: "Liberation Mono", "Courier New", monospace;
  font-size: 14px;
  overflow: hidden;
}

.output {
  display: grid;
  grid-template-rows: repeat(15, 1fr);
  align-items: center;
  height: 294px;
}

.output a {
  color: #2a2ac8;
  text-decoration: underline;
}

.sys {
  color: #29297e;
}

.err {
  color: #8c2f38;
}

.caret {
  width: 2px;
  height: 19px;
  background: #000;
}

.scroll {
  position: absolute;
  bottom: 0;
  left: 13px;
  width: 180px;
  height: 12px;
  background: #e6e5e6;
}

.balloon {
  position: absolute;
  right: 8px;
  bottom: 10px;
  display: flex;
  gap: 8px;
  width: 396px;
  height: 72px;
  padding: 10px 12px;
  border: 1px solid #bbb;
  border-radius: 3px;
  background: #f2f1f2;
  box-shadow: 0 1px 4px #999;
  font-family: "Open Sans", "Noto Sans", sans-serif;
  line-height: 24px;
}

.balloon svg {
  width: 18px;
  height: 18px;
  margin-top: 2px;
}

.balloon a {
  color: #2a1fd0;
  text-decoration: underline;
}

.toolbar {
  display: flex;
  height: 27px;
  padding-left: 24px;
  border-top: 1px solid #999;
}

.toolbar button {
  display: flex;
  align-items: center;
  gap: 5px;
  padding: 0 11px;
}

.toolbar .on {
  background: #b9b9b9;
}

.toolbar .last {
  margin-right: 28px;
  margin-left: auto;
}

.status {
  display: flex;
  align-items: center;
  gap: 8px;
  height: 24px;
  padding-left: 11px;
  border-top: 1px solid #999;
}

.info {
  display: flex;
  align-items: center;
  gap: 12px;
  margin-left: auto;
  padding-right: 10px;
}

.pick {
  display: flex;
  align-items: center;
  gap: 1px;
}

.pick svg {
  width: 6px;
  height: 10px;
}

/* taskbar */
.taskbar {
  display: flex;
  height: 45px;
  background: #050505;
  color: #e8e8e8;
}

.start {
  display: flex;
  align-items: center;
  justify-content: center;
  width: 57px;
}

.start svg {
  width: 20px;
  height: 20px;
}

.search {
  display: flex;
  align-items: center;
  gap: 11px;
  width: 414px;
  padding: 0 17px 0 11px;
  background: #353335;
}

.ring {
  width: 26px;
  height: 26px;
}

.search input {
  flex: 1;
  font-size: 16px;
}

.search input::placeholder {
  color: #9a9a9a;
}

.mic {
  width: 16px;
  height: 20px;
}

.apps {
  display: grid;
  grid-template-columns: repeat(17, 1fr);
  flex: 1;
  padding: 0 4px;
}

.apps a {
  display: flex;
  align-items: center;
  justify-content: center;
  margin: 0 5px;
}

.apps svg {
  width: 27px;
  height: 27px;
}

.apps .open {
  padding-top: 2px;
  border-bottom: 2px solid #7fd8d8;
}

.apps .on {
  margin: 0 1px;
  background: #3a3a3a;
}

.app-text {
  fill: #fff;
  font-size: 11px;
  font-weight: bold;
}

.tray {
  display: flex;
  align-items: center;
  gap: 9px;
  padding: 0 29px 0 4px;
  font-size: 13px;
}

.tray svg {
  width: 20px;
  height: 20px;
}

.tray time {
  width: 78px;
  line-height: 20px;
  text-align: center;
}

.notes {
  position: relative;
  margin-left: 7px;
}

.badge {
  position: absolute;
  top: 7px;
  left: 9px;
  width: 20px;
  height: 20px;
  border: 1px solid #777;
  border-radius: 10px;
  background: #222;
  line-height: 18px;
  text-align: center;
}
```
